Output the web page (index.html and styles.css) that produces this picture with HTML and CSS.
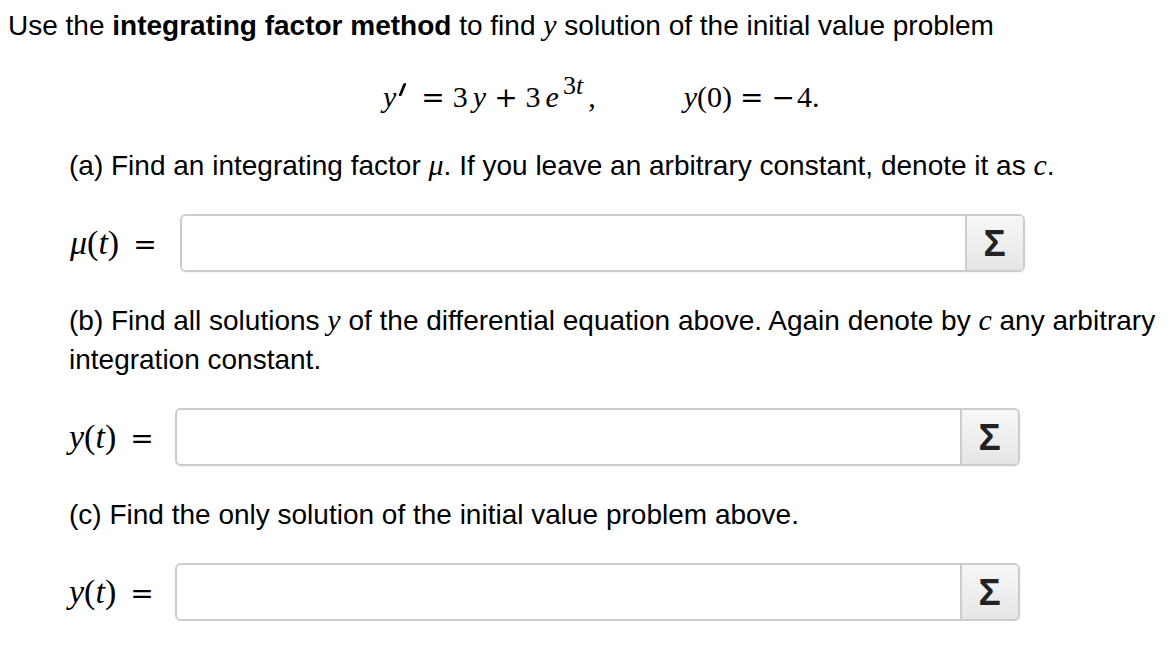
FILE: index.html
```html
<!DOCTYPE html>
<html>
<head>
<meta charset="utf-8">
<link rel="stylesheet" href="styles.css">
</head>
<body>
<div class="page">
  <p class="intro">Use the <b>integrating factor method</b> to find <span class="mi">y</span> solution of the initial value problem</p>

  <div class="equation">
    <span class="math">
      <span class="mi">y</span><span class="prime" aria-label="′"></span><span class="mo eq">=</span><span class="mn">3</span><span class="mi sp">y</span><span class="mo">+</span><span class="mn">3</span><span class="mi sp">e</span><sup class="sup"><span class="mn">3</span><span class="mi">t</span></sup><span class="mn comma">,</span>
    </span>
    <span class="math second">
      <span class="mi">y</span><span class="mn">(0)</span><span class="mo">=</span><span class="mo minus">−</span><span class="mn">4.</span>
    </span>
  </div>

  <section class="part">
    <p class="question">(a) Find an integrating factor <span class="mi">μ</span>. If you leave an arbitrary constant, denote it as <span class="mi">c</span>.</p>
    <div class="answer-row">
      <span class="math label label-mu"><span class="mi">μ</span><span class="mn">(</span><span class="mi">t</span><span class="mn">)</span><span class="mo">=</span></span>
      <div class="answer-box">
        <div class="field"></div>
        <div class="sigma-btn"><span class="sigma">Σ</span></div>
      </div>
    </div>
  </section>

  <section class="part">
    <p class="question">(b) Find all solutions <span class="mi">y</span> of the differential equation above. Again denote by <span class="mi">c</span> any arbitrary integration constant.</p>
    <div class="answer-row">
      <span class="math label"><span class="mi">y</span><span class="mn">(</span><span class="mi">t</span><span class="mn">)</span><span class="mo">=</span></span>
      <div class="answer-box">
        <div class="field"></div>
        <div class="sigma-btn"><span class="sigma">Σ</span></div>
      </div>
    </div>
  </section>

  <section class="part">
    <p class="question">(c) Find the only solution of the initial value problem above.</p>
    <div class="answer-row">
      <span class="math label"><span class="mi">y</span><span class="mn">(</span><span class="mi">t</span><span class="mn">)</span><span class="mo">=</span></span>
      <div class="answer-box">
        <div class="field"></div>
        <div class="sigma-btn"><span class="sigma">Σ</span></div>
      </div>
    </div>
  </section>
</div>
</body>
</html>
```

FILE: styles.css
```css
html, body {
  margin: 0;
  padding: 0;
  background: #ffffff;
}

.page {
  padding: 6px 4px 0 8px;
  font-family: "Liberation Sans", Arial, sans-serif;
  font-size: 28px;
  line-height: 39px;
  color: #000;
}

p {
  margin: 0;
}

.intro b {
  font-weight: bold;
}

.mi {
  font-family: "Liberation Serif", "Times New Roman", serif;
  font-style: italic;
  font-size: 30px;
}

.mn {
  font-family: "Liberation Serif", "Times New Roman", serif;
  font-style: normal;
  font-size: 30px;
}

.intro .mi,
.question .mi {
  line-height: 1;
}

.mo {
  font-family: "DejaVu Serif", serif;
  font-size: 28px;
  margin: 0 8px;
}

.mo.eq {
  margin-left: 17px;
}

.mo.minus {
  margin: 0 2px 0 0;
}

.prime {
  display: inline-block;
  width: 3px;
  height: 13px;
  margin-left: 5px;
  vertical-align: 11px;
  background: #000;
  border-radius: 2px 2px 1px 1px;
  transform: skewX(-22deg);
}

.sp {
  margin-left: 5px;
}

.sup {
  line-height: 0;
  vertical-align: 13px;
  margin-left: 4px;
}

.sup .mn,
.sup .mi {
  font-size: 26px;
}

.comma {
  margin-left: 5px;
}

.equation {
  display: flex;
  justify-content: flex-start;
  padding-left: 375px;
  margin-top: 32px;
  height: 40px;
  align-items: center;
}

.math {
  white-space: nowrap;
  line-height: 39px;
}

.second {
  margin-left: 88px;
}

.part {
  padding-left: 61px;
  margin-top: 29px;
}

.question {
  margin-bottom: 29px;
}

.answer-row {
  display: flex;
  align-items: center;
  height: 58px;
}

.label .mi,
.label .mn {
  font-size: 34px;
}

.label .mo {
  margin: 0 0 0 14px;
}

.label {
  margin-right: 21px;
}

.label-mu {
  margin-left: 1px;
  margin-right: 23px;
}

.answer-box {
  display: flex;
  width: 845px;
  height: 58px;
  box-sizing: border-box;
  border: 2px solid #cccccc;
  border-radius: 6px;
  overflow: hidden;
  box-shadow: 0 1px 2px rgba(0, 0, 0, 0.06);
}

.field {
  flex: 1;
  background: #fff;
}

.sigma-btn {
  width: 56px;
  border-left: 2px solid #cccccc;
  background: linear-gradient(#f7f7f7, #e6e6e6);
  display: flex;
  align-items: center;
  justify-content: center;
}

.sigma {
  font-family: "Liberation Sans", Arial, sans-serif;
  font-weight: bold;
  font-size: 37px;
  line-height: 1;
  color: #222;
}
```
